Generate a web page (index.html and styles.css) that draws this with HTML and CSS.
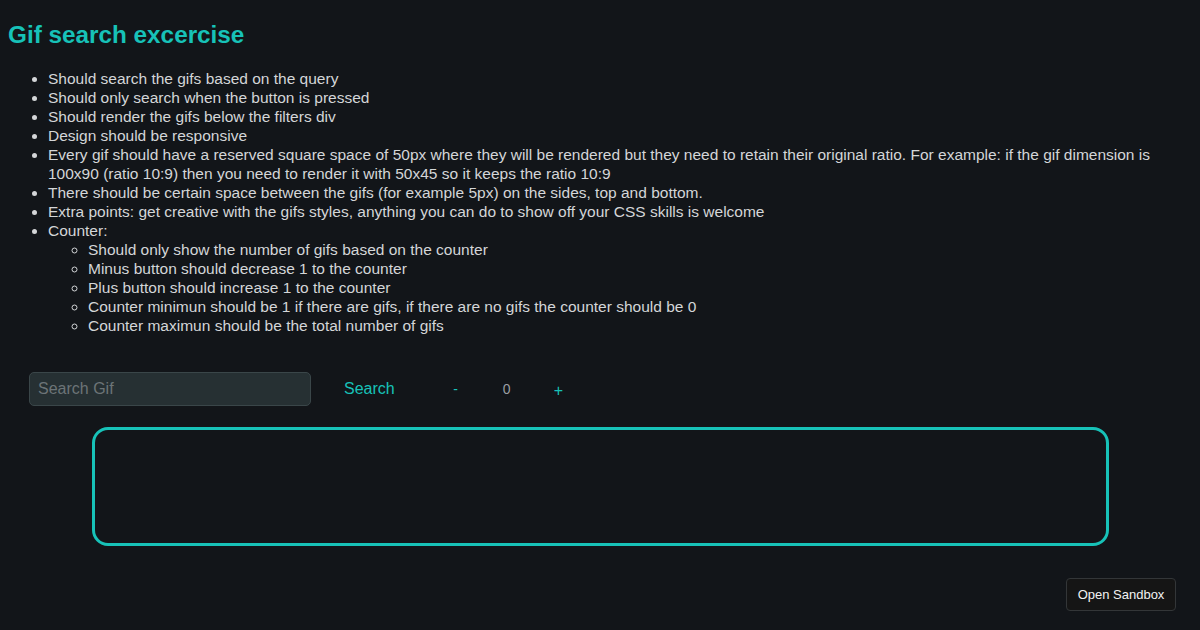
FILE: index.html
```html
<!DOCTYPE html>
<html>
<head>
<meta charset="utf-8">
<link rel="stylesheet" href="styles.css">
</head>
<body>
<h2 class="title">Gif search excercise</h2>
<ul class="reqs">
  <li>Should search the gifs based on the query</li>
  <li>Should only search when the button is pressed</li>
  <li>Should render the gifs below the filters div</li>
  <li>Design should be responsive</li>
  <li>Every gif should have a reserved square space of 50px where they will be rendered but they need to retain their original ratio. For example: if the gif dimension is 100x90 (ratio 10:9) then you need to render it with 50x45 so it keeps the ratio 10:9</li>
  <li>There should be certain space between the gifs (for example 5px) on the sides, top and bottom.</li>
  <li>Extra points: get creative with the gifs styles, anything you can do to show off your CSS skills is welcome</li>
  <li>Counter:
    <ul class="sub">
      <li>Should only show the number of gifs based on the counter</li>
      <li>Minus button should decrease 1 to the counter</li>
      <li>Plus button should increase 1 to the counter</li>
      <li>Counter minimun should be 1 if there are gifs, if there are no gifs the counter should be 0</li>
      <li>Counter maximun should be the total number of gifs</li>
    </ul>
  </li>
</ul>
<div class="filters">
  <input class="search-input" type="text" placeholder="Search Gif">
  <button class="search-btn">Search</button>
  <div class="counter">
    <button class="count-btn">-</button>
    <span class="count">0</span>
    <button class="count-btn plus">+</button>
  </div>
</div>
<div class="gifs"></div>
<button class="sandbox">Open Sandbox</button>
</body>
</html>
```
FILE: styles.css
```css
html, body {
  background: #121519;
}
body {
  margin: 0;
  padding: 8px;
  font-family: "Liberation Sans", Arial, sans-serif;
  color: #d4d6d8;
  font-size: 15.5px;
}
.title {
  color: #17c2b8;
  font-size: 24.3px;
  font-weight: bold;
  margin: 13px 0 20px;
  line-height: 28px;
}
.reqs {
  margin: 0;
  padding-left: 40px;
  line-height: 19px;
}
.sub {
  list-style-type: circle;
  padding-left: 40px;
  margin: 0;
}
.filters {
  display: flex;
  align-items: center;
  padding: 0 21px;
  margin-top: 37px;
  height: 34px;
}
.search-input {
  box-sizing: border-box;
  width: 282px;
  height: 34px;
  background: #263033;
  border: 1px solid #3a4649;
  border-radius: 5px;
  padding: 0 8px;
  font-family: "Liberation Sans", Arial, sans-serif;
  font-size: 16px;
  color: #d2d4d6;
  outline: none;
}
.search-input::placeholder {
  color: #6c7477;
}
.search-btn {
  background: transparent;
  border: none;
  color: #17c2b8;
  font-family: "Liberation Sans", Arial, sans-serif;
  font-size: 16px;
  padding: 0;
  margin-left: 33px;
}
.counter {
  display: flex;
  align-items: center;
  margin-left: 57px;
}
.count-btn {
  background: transparent;
  border: none;
  color: #17c2b8;
  font-family: "Liberation Sans", Arial, sans-serif;
  font-size: 14px;
  padding: 0;
  width: 8px;
}
.count {
  color: #9a9fa3;
  font-size: 14px;
  margin: 0 43px 0 43px;
}
.plus {
  font-size: 16px;
  width: 10px;
  margin-top: 4px;
}
.gifs {
  box-sizing: border-box;
  width: 1017px;
  height: 119px;
  margin: 21px auto 0;
  border: 3px solid #17c2b8;
  border-radius: 16px;
}
.sandbox {
  position: fixed;
  right: 24px;
  bottom: 19px;
  width: 110px;
  height: 33px;
  background: #151515;
  border: 1px solid #333638;
  border-radius: 4px;
  color: #f2f2f2;
  font-family: "Liberation Sans", Arial, sans-serif;
  font-size: 13px;
  padding: 0;
}
```
